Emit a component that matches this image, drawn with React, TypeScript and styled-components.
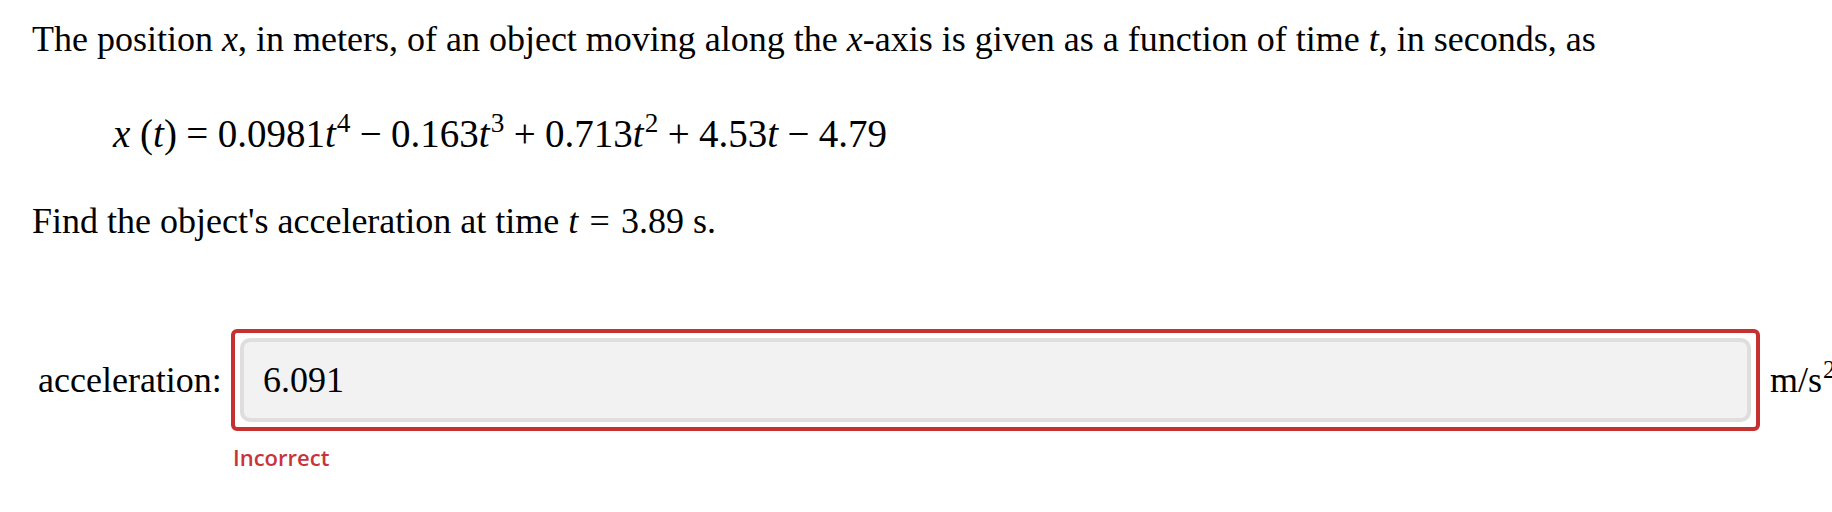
import React from "react";
import styled, { createGlobalStyle } from "styled-components";

const Global = createGlobalStyle`
  html, body {
    margin: 0;
    padding: 0;
    background: #ffffff;
    overflow: hidden;
  }
  body {
    font-family: "Liberation Serif", "Times New Roman", serif;
    color: #000;
  }
`;

const Page = styled.div`
  padding-top: 18px;
  width: 1832px;
`;

const Para = styled.p`
  margin: 0 0 0 32px;
  font-size: 36px;
  line-height: 42px;
  white-space: nowrap;
`;

const Var = styled.i`
  font-style: italic;
`;

const Equation = styled.div`
  margin: 52px 0 44px 113px;
  font-size: 39px;
  line-height: 44px;
  white-space: nowrap;
`;

const Op = styled.span<{ $wide?: boolean }>`
  margin: 0 ${(p) => (p.$wide ? "0.31em" : "0.24em")};
`;

const Sup = styled.sup`
  font-size: 70%;
  line-height: 0;
  vertical-align: 0.55em;
  margin-left: 1px;
`;

const AnswerRow = styled.div`
  display: flex;
  align-items: center;
  margin-top: 87px;
  padding-left: 38px;
`;

const Label = styled.span`
  font-size: 36px;
  width: 193px;
  flex-shrink: 0;
`;

const Frame = styled.div`
  width: 1511px;
  flex-shrink: 0;
  border: 4px solid #c53030;
  border-radius: 6px;
  padding: 5px;
  background: #fff;
`;

const Field = styled.div`
  height: 76px;
  border: 4px solid #dedede;
  border-radius: 10px;
  background: #f2f2f2;
  padding-left: 19px;
  display: flex;
  align-items: center;
  font-size: 36px;
`;

const Unit = styled.span`
  margin-left: 10px;
  font-size: 36px;
  white-space: nowrap;
`;

const Feedback = styled.div`
  margin: 11px 0 0 233px;
  font-family: "Open Sans", "Noto Sans", sans-serif;
  font-weight: 600;
  font-size: 22px;
  line-height: 30px;
  color: #c7343a;
`;

export default function App() {
  return (
    <Page>
      <Global />
      <Para>
        The position <Var>x</Var>, in meters, of an object moving along the <Var>x</Var>-axis is
        given as a function of time <Var>t</Var>, in seconds, as
      </Para>
      <Equation>
        <Var>x</Var> (<Var>t</Var>)<Op>=</Op>0.0981<Var>t</Var>
        <Sup>4</Sup>
        <Op>−</Op>0.163<Var>t</Var>
        <Sup>3</Sup>
        <Op>+</Op>0.713<Var>t</Var>
        <Sup>2</Sup>
        <Op>+</Op>4.53<Var>t</Var>
        <Op>−</Op>4.79
      </Equation>
      <Para>
        Find the object's acceleration at time <Var>t</Var>
        <Op $wide>=</Op>3.89 s.
      </Para>
      <AnswerRow>
        <Label>acceleration:</Label>
        <Frame>
          <Field>6.091</Field>
        </Frame>
        <Unit>
          m/s<Sup>2</Sup>
        </Unit>
      </AnswerRow>
      <Feedback>Incorrect</Feedback>
    </Page>
  );
}
